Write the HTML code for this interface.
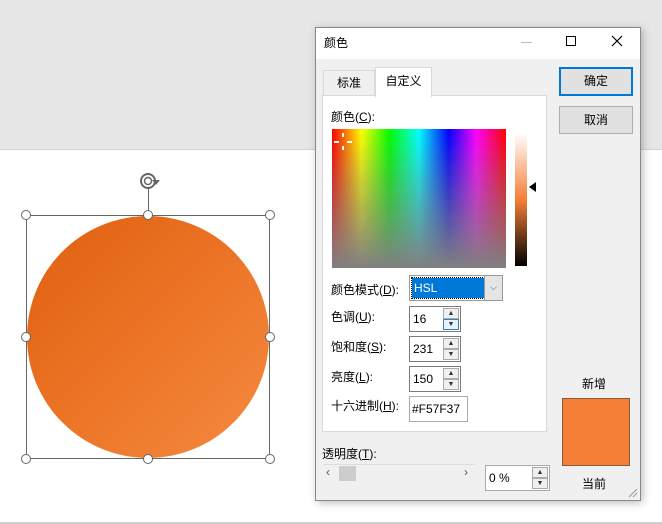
<!DOCTYPE html>
<html><head><meta charset="utf-8"><style>
*{box-sizing:border-box;margin:0;padding:0}
body{width:662px;height:524px;position:relative;overflow:hidden;background:#fff;font-family:"Liberation Sans","Noto Sans CJK SC",sans-serif;font-size:12px;color:#000}
.a{position:absolute}
.h{position:absolute;width:10px;height:10px;border:1.5px solid #666;border-radius:50%;background:#fff}
.box{position:absolute;background:#fff;border:1px solid #7a7a7a}
.sp{position:absolute;right:1px;top:1px;width:16px;bottom:1px}
.sp div{height:50%;border:1px solid #aaa;background:#f0f0f0;font-size:7px;text-align:center;line-height:9px;color:#333}
.lbl{position:absolute;left:331px;font-size:12px}
.btn{position:absolute;left:559px;width:74px;background:#e1e1e1;border:1px solid #adadad;text-align:center;font-size:12px}
</style></head><body>
<div class="a" style="left:0;top:0;width:662px;height:150px;background:#e6e6e6;border-bottom:1px solid #d0d0d0"></div>
<div class="a" style="left:0;top:522px;width:662px;height:2px;background:#d0d0d0"></div>
<div class="a" style="left:27px;top:216px;width:242px;height:242px;border-radius:50%;background:linear-gradient(135deg,#e05f10 0%,#ec7426 50%,#f58a40 100%)"></div>
<div class="a" style="left:26px;top:215px;width:244px;height:244px;border:1px solid #666"></div>
<div class="a" style="left:148px;top:188px;width:1px;height:27px;background:#666"></div>
<svg class="a" style="left:138px;top:170px" width="24" height="22" viewBox="0 0 24 22"><circle cx="10" cy="11" r="7" fill="none" stroke="#666" stroke-width="2"/><circle cx="10" cy="11" r="3.5" fill="none" stroke="#666" stroke-width="1.5"/><path d="M14 10 L22 10 L18 15Z" fill="#666"/></svg>
<div class="h" style="left:21px;top:210px"></div><div class="h" style="left:143px;top:210px"></div><div class="h" style="left:265px;top:210px"></div>
<div class="h" style="left:21px;top:332px"></div><div class="h" style="left:265px;top:332px"></div>
<div class="h" style="left:21px;top:454px"></div><div class="h" style="left:143px;top:454px"></div><div class="h" style="left:265px;top:454px"></div>

<div class="a" style="left:315px;top:27px;width:326px;height:474px;background:#f0f0f0;border:1px solid #888;box-shadow:2px 2px 8px rgba(0,0,0,.25)"></div>
<div class="a" style="left:316px;top:28px;width:324px;height:31px;background:#fff"></div>
<div class="a" style="left:324px;top:34px;font-size:12px">颜色</div>
<div class="a" style="left:521px;top:42px;width:11px;height:1px;background:#bbb"></div>
<div class="a" style="left:566px;top:36px;width:10px;height:10px;border:1px solid #000"></div>
<svg class="a" style="left:611px;top:35px" width="12" height="12"><path d="M1 1L11 11M11 1L1 11" stroke="#000" stroke-width="1.2"/></svg>

<div class="a" style="left:323px;top:70px;width:52px;height:26px;border:1px solid #d9d9d9;border-bottom:none;text-align:center;line-height:24px">标准</div>
<div class="a" style="left:322px;top:95px;width:225px;height:337px;background:#fff;border:1px solid #d9d9d9"></div>
<div class="a" style="left:375px;top:67px;width:57px;height:30px;background:#fff;border:1px solid #d9d9d9;border-bottom:none;text-align:center;line-height:26px">自定义</div>
<div class="lbl" style="top:108px">颜色(<u>C</u>):</div>
<div class="a" style="left:332px;top:129px;width:174px;height:139px;background:linear-gradient(to bottom,rgba(128,128,128,0),#808080),linear-gradient(to right,#f00,#ff0 17%,#0f0 33%,#0ff 50%,#00f 67%,#f0f 83%,#f00)"></div>
<div class="a" style="left:342px;top:133px;width:2px;height:4px;background:#fff"></div>
<div class="a" style="left:342px;top:146px;width:2px;height:4px;background:#fff"></div>
<div class="a" style="left:334px;top:141px;width:5px;height:2px;background:#fff"></div>
<div class="a" style="left:347px;top:141px;width:5px;height:2px;background:#fff"></div>
<div class="a" style="left:515px;top:133px;width:12px;height:133px;background:linear-gradient(#fff,#f57f37 50%,#000)"></div>
<svg class="a" style="left:529px;top:182px" width="8" height="10"><path d="M0 5L7 0V10Z" fill="#000"/></svg>

<div class="lbl" style="top:281px">颜色模式(<u>D</u>):</div>
<div class="box" style="left:409px;top:275px;width:94px;height:26px;border-color:#999"><div class="a" style="left:2px;top:2px;width:72px;height:20px;background:#0078d7;color:#fff;padding-left:2px;line-height:20px;font-size:12px;outline:1px dotted #000">HSL</div><div class="a" style="right:0;top:0;width:18px;height:24px;border-left:1px solid #999;background:#e5e5e5;text-align:center;line-height:22px;font-size:9px;color:#555">⌵</div></div>
<div class="lbl" style="top:308px">色调(<u>U</u>):</div>
<div class="box" style="left:409px;top:306px;width:52px;height:26px;padding:5px 0 0 3px">16<div class="sp"><div>▲</div><div style="background:#e5f1fb;border-color:#3c7fb1">▼</div></div></div>
<div class="lbl" style="top:338px">饱和度(<u>S</u>):</div>
<div class="box" style="left:409px;top:336px;width:52px;height:26px;padding:5px 0 0 3px">231<div class="sp"><div>▲</div><div>▼</div></div></div>
<div class="lbl" style="top:368px">亮度(<u>L</u>):</div>
<div class="box" style="left:409px;top:366px;width:52px;height:26px;padding:5px 0 0 3px">150<div class="sp"><div>▲</div><div>▼</div></div></div>
<div class="lbl" style="top:397px">十六进制(<u>H</u>):</div>
<div class="box" style="left:409px;top:396px;width:59px;height:26px;padding:5px 0 0 2px;border-color:#aaa">#F57F37</div>

<div class="a" style="left:322px;top:445px">透明度(<u>T</u>):</div>
<div class="a" style="left:323px;top:464px;width:152px;height:1px;background:#ddd"></div>
<div class="a" style="left:326px;top:465px;font-size:12px;color:#555">‹</div>
<div class="a" style="left:339px;top:466px;width:17px;height:15px;background:#cdcdcd"></div>
<div class="a" style="left:464px;top:465px;font-size:12px;color:#555">›</div>
<div class="box" style="left:485px;top:465px;width:65px;height:26px;padding:5px 0 0 3px;border-color:#aaa">0 %<div class="sp"><div>▲</div><div>▼</div></div></div>

<div class="btn" style="top:67px;height:29px;line-height:25px;border:2px solid #0078d7">确定</div>
<div class="btn" style="top:106px;height:28px;line-height:26px">取消</div>
<div class="a" style="left:582px;top:375px">新增</div>
<div class="a" style="left:562px;top:398px;width:68px;height:68px;background:#f57f37;border:1px solid #8a5a3a"></div>
<div class="a" style="left:582px;top:475px">当前</div>
<svg class="a" style="left:628px;top:488px" width="10" height="10"><path d="M9 1L1 9M9 5L5 9" stroke="#999"/></svg>
</body></html>
